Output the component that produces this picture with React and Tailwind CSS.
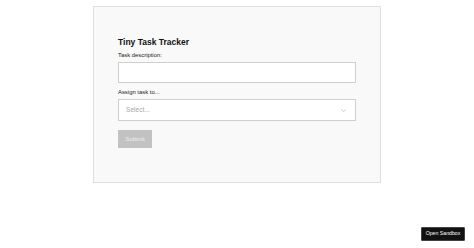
import React from "react";

export default function App() {
  return (
    <div
      className="w-full h-[248px] bg-white flex justify-center pt-[6px]"
      style={{ fontFamily: '"Liberation Sans", Arial, sans-serif' }}
    >
      <div className="w-[288px] h-[177px] bg-[#f9f9f9] border border-[#dedede] px-[24px] pt-[30px] flex flex-col">
        <h1 className="text-[8.5px] leading-[10px] font-bold text-[#111]">Tiny Task Tracker</h1>
        <label className="mt-[5px] text-[5.9px] leading-[7px] text-[#222]">Task description:</label>
        <input
          type="text"
          className="mt-[3px] h-[21px] w-full bg-white border border-[#cfcfcf] outline-none"
        />
        <label className="mt-[6px] text-[5.9px] leading-[7px] text-[#222]">Assign task to...</label>
        <div className="mt-[3px] h-[22px] w-full bg-white border border-[#cfcfcf] flex items-center justify-between pl-[7px] pr-[9px]">
          <span className="text-[6.6px] text-[#a8a8a8]">Select...</span>
          <svg width="5" height="3" viewBox="0 0 5 3" fill="none">
            <path d="M0.4 0.5 L2.5 2.5 L4.6 0.5" stroke="#b5b5b5" strokeWidth="0.7" />
          </svg>
        </div>
        <div className="mt-[9px]">
          <button className="w-[34px] h-[18px] bg-[#c2c2c2] text-[#f0f0f0] text-[6.2px] flex items-center justify-center">
            Submit
          </button>
        </div>
      </div>
      <div className="fixed right-[9px] bottom-[7px] w-[44px] h-[14px] bg-[#111] rounded-[1px] border border-[#444] text-white text-[5.2px] flex items-center justify-center">
        Open Sandbox
      </div>
    </div>
  );
}
